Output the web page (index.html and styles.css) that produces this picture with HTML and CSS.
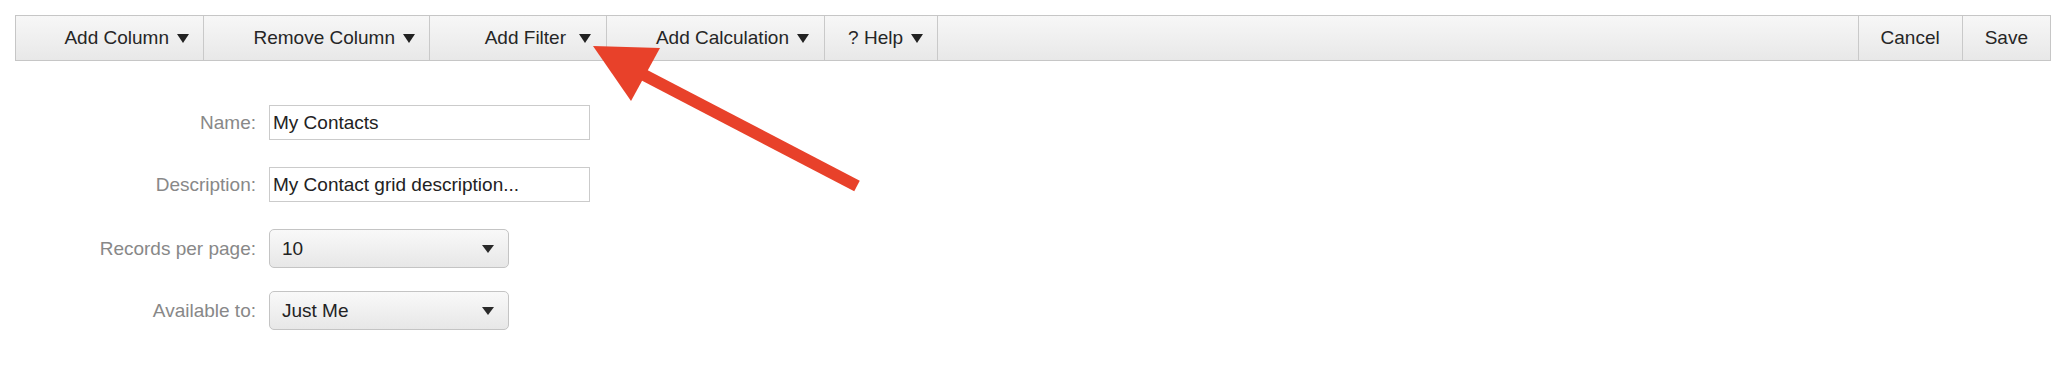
FILE: index.html
```html
<!DOCTYPE html>
<html lang="en">
<head>
<meta charset="utf-8">
<title>Edit Grid</title>
<link rel="stylesheet" href="styles.css">
</head>
<body>
<div class="page">
  <div class="toolbar">
    <div class="tb-item tb-add-column">Add Column<svg class="caret" viewBox="0 0 12 9"><path d="M0 0H12L6 9Z"/></svg></div>
    <div class="tb-item tb-remove-column">Remove Column<svg class="caret" viewBox="0 0 12 9"><path d="M0 0H12L6 9Z"/></svg></div>
    <div class="tb-item tb-filter">Add Filter<svg class="caret" viewBox="0 0 12 9"><path d="M0 0H12L6 9Z"/></svg></div>
    <div class="tb-item tb-calc">Add Calculation<svg class="caret" viewBox="0 0 12 9"><path d="M0 0H12L6 9Z"/></svg></div>
    <div class="tb-item tb-help">? Help<svg class="caret" viewBox="0 0 12 9"><path d="M0 0H12L6 9Z"/></svg></div>
    <div class="tb-spacer"></div>
    <div class="tb-action">Cancel</div>
    <div class="tb-action">Save</div>
  </div>

  <form class="form">
    <div class="row">
      <label class="label" for="name">Name:</label>
      <input class="text-input" id="name" type="text" value="My Contacts">
    </div>
    <div class="row">
      <label class="label" for="desc">Description:</label>
      <input class="text-input" id="desc" type="text" value="My Contact grid description...">
    </div>
    <div class="row row-select">
      <span class="label">Records per page:</span>
      <div class="select"><span>10</span><svg class="select-caret" viewBox="0 0 12 8"><path d="M0 0H12L6 8Z"/></svg></div>
    </div>
    <div class="row row-select row-last">
      <span class="label">Available to:</span>
      <div class="select"><span>Just Me</span><svg class="select-caret" viewBox="0 0 12 8"><path d="M0 0H12L6 8Z"/></svg></div>
    </div>
  </form>

  <svg class="annotation" viewBox="0 0 2064 372" width="2064" height="372">
    <line x1="644" y1="75" x2="857" y2="186" stroke="#e8412a" stroke-width="12"/>
    <polygon points="593,46 660,48 631,101" fill="#e8412a"/>
  </svg>
</div>
</body>
</html>
```

FILE: styles.css
```css
html, body {
  margin: 0;
  padding: 0;
  background: #ffffff;
}

.page {
  position: relative;
  padding: 15px 13px 0 15px;
  font-family: "Liberation Sans", Arial, Helvetica, sans-serif;
  font-size: 19px;
  color: #262626;
  height: 357px;
  box-sizing: content-box;
}

.toolbar {
  display: flex;
  height: 46px;
  box-sizing: border-box;
  border: 1px solid #c6c6c6;
  background: linear-gradient(#f7f7f7, #e8e8e8);
}

.tb-item {
  display: flex;
  align-items: center;
  justify-content: flex-end;
  box-sizing: border-box;
  padding: 0 14px 0 0;
  border-right: 1px solid #c9c9c9;
  white-space: nowrap;
}

.tb-add-column { width: 188px; }
.tb-remove-column { width: 226px; }
.tb-filter { width: 177px; }
.tb-calc { width: 218px; padding-right: 15px; }
.tb-help { width: 113px; }

.caret {
  width: 12px;
  height: 9px;
  margin-left: 8px;
  fill: #222;
}

.tb-filter .caret {
  margin-left: 13px;
  margin-right: 1px;
}

.tb-spacer {
  flex: 1;
}

.tb-action {
  display: flex;
  align-items: center;
  padding: 0 22px;
  border-left: 1px solid #c9c9c9;
}

.form {
  display: flex;
  flex-direction: column;
  margin: 44px 0 0 0;
}

.row {
  display: flex;
  align-items: center;
  height: 35px;
  margin-bottom: 27px;
}

.row-select {
  height: 39px;
  margin-bottom: 23px;
}

.row-last {
  margin-bottom: 0;
}

.label {
  width: 241px;
  text-align: right;
  color: #888888;
  margin-right: 13px;
}

.text-input {
  box-sizing: border-box;
  width: 321px;
  height: 35px;
  margin: 0;
  padding: 0 3px;
  border: 1px solid #cbcbcb;
  border-radius: 0;
  font-family: inherit;
  font-size: 19px;
  color: #222;
  background: #fff;
  outline: none;
}

.select {
  box-sizing: border-box;
  width: 240px;
  height: 39px;
  display: flex;
  align-items: center;
  justify-content: space-between;
  padding: 0 14px 0 12px;
  border: 1px solid #c4c4c4;
  border-radius: 5px;
  background: linear-gradient(#f9f9f9, #e7e7e7);
  color: #222;
}

.select-caret {
  width: 12px;
  height: 8px;
  fill: #2a2a2a;
}

.annotation {
  position: absolute;
  left: 0;
  top: 0;
  pointer-events: none;
}
```
